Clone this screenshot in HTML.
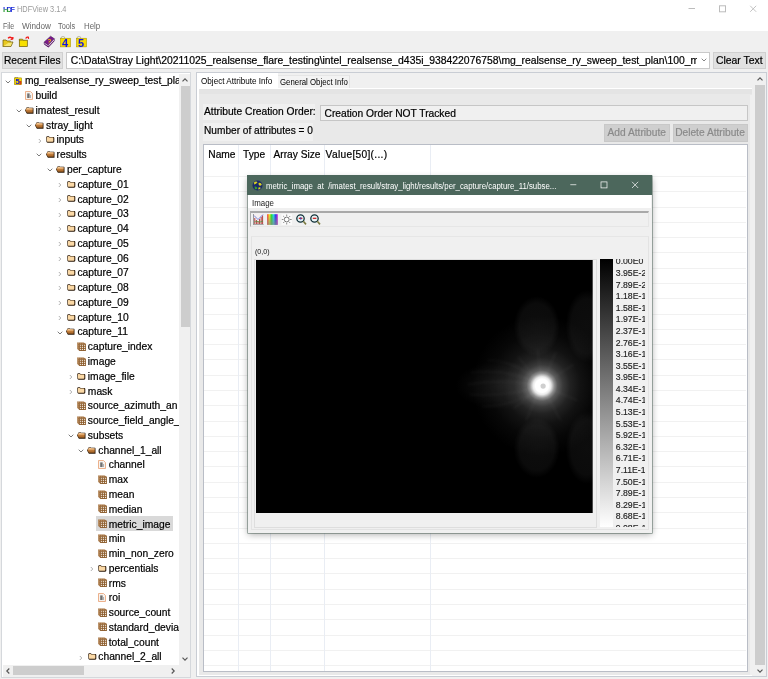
<!DOCTYPE html>
<html><head><meta charset="utf-8"><title>HDFView 3.1.4</title>
<style>
*{box-sizing:border-box;margin:0;padding:0}
html,body{width:768px;height:679px;overflow:hidden;background:#f0f0f0;font-family:"Liberation Sans",sans-serif;}
body{position:relative}
.abs{position:absolute}
#titlebar{position:absolute;left:0;top:0;width:768px;height:31px;background:#fff}
#title{position:absolute;left:16.5px;top:3.6px;line-height:10px;transform-origin:0 0;transform:scaleX(0.889);font-size:8.3px;color:#9a9a9a;white-space:nowrap}
#menu{position:absolute;left:2px;top:19.5px;font-size:8.7px;color:#707070;white-space:nowrap;word-spacing:0}
.mi{position:absolute;top:20.9px;color:#666;white-space:nowrap;line-height:10px;font-size:8.3px;transform-origin:0 0}
.btn{position:absolute;background:#e1e1e1;border:1px solid #d0d0d0;-webkit-text-stroke:0.2px;font-size:10.2px;color:#000;text-align:center;white-space:nowrap}
#combo{position:absolute;left:66px;top:51.5px;width:643.5px;height:17px;background:#fff;border:1px solid #c9c9c9;-webkit-text-stroke:0.2px #000;font-size:10.38px;line-height:15px;padding-left:3.7px;white-space:nowrap;overflow:hidden;color:#000}
/* tree */
#treepanel{position:absolute;left:1px;top:72px;width:190px;height:606px;background:#fff;border:1px solid #d5d8dc}
.tl{position:absolute;font-size:10.28px;-webkit-text-stroke:0.2px #000;line-height:15px;white-space:nowrap;color:#000}
.ti{position:absolute;line-height:0}
.ar{position:absolute}
.sel{position:absolute;height:14.8px;background:#d9d9d9}
.ic{display:block}
#rpanel{position:absolute;left:196px;top:72px;width:571px;height:605px;border:1px solid #c9cdd4;background:#f0f0f0}
.tab{position:absolute;font-size:8.6px;transform-origin:0 0;transform:scaleX(0.945);white-space:nowrap;color:#000;line-height:14px}
.hl{position:absolute;left:204px;width:542px;height:1px;background:#f1f1f1}
.vl{position:absolute;top:145.3px;width:1px;height:525.5px;background:#e9edf4}
.th{position:absolute;top:146.8px;-webkit-text-stroke:0.2px #000;font-size:10.2px;line-height:15px;white-space:nowrap}
.lbl{position:absolute;font-size:10.25px;-webkit-text-stroke:0.2px #000;line-height:15px;white-space:nowrap;background:#f0f0f0}
/* inner window */
#win{position:absolute;left:247.7px;top:175.7px;width:404px;height:357.8px;background:#f0f0f0;box-shadow:0 1.5px 7px rgba(0,0,0,.33), 0 0 0 0.6px #7a8f85}
#wtitle{position:absolute;left:-0.6px;top:-0.4px;width:405.2px;height:20.1px;background:#4c675c}
#wtitle .t{position:absolute;left:19.2px;top:5.8px;font-size:8.5px;line-height:10px;color:#fff;white-space:nowrap;transform-origin:0 0;transform:scaleX(0.9205)}
.cbl{position:absolute;left:615.8px;-webkit-text-stroke:0.15px;font-size:8.7px;line-height:10px;white-space:nowrap;color:#222}
</style></head><body>
<div id="titlebar">
 <svg class="abs" style="left:2.8px;top:5px" width="13" height="9" viewBox="0 0 13 9"><defs><clipPath id="lt"><rect x="0" y="0" width="13" height="4.4"/></clipPath><clipPath id="lb"><rect x="0" y="4.4" width="7" height="5"/></clipPath><clipPath id="lb2"><rect x="7" y="4.4" width="6" height="5"/></clipPath></defs><g font-family="Liberation Sans,sans-serif" font-size="7.6" font-weight="bold" letter-spacing="-1.9"><text x="0" y="7.2" fill="#2030d8" clip-path="url(#lt)">HDF</text><text x="0" y="7.2" fill="#2a9a30" clip-path="url(#lb)">HDF</text><text x="0" y="7.2" fill="#2030d8" clip-path="url(#lb2)">HDF</text></g></svg>
 <div id="title">HDFView 3.1.4</div>
 <div class="mi" style="left:2.5px;transform:scaleX(0.842)">File</div><div class="mi" style="left:21.7px;transform:scaleX(0.983)">Window</div><div class="mi" style="left:58.2px;transform:scaleX(0.887)">Tools</div><div class="mi" style="left:84.2px;transform:scaleX(0.952)">Help</div>
 <svg class="abs" style="left:680px;top:0" width="88" height="18" viewBox="0 0 88 18"><path d="M8.5 8.5H15" stroke="#bcbcbc" stroke-width="1"/><rect x="39.5" y="5.8" width="6" height="6" fill="none" stroke="#bcbcbc" stroke-width="1"/><path d="M70.2 5.8L76.2 11.8M76.2 5.8L70.2 11.8" stroke="#bcbcbc" stroke-width="0.9"/></svg>
</div>
<!-- toolbar icons -->
<svg class="abs" style="left:2px;top:35px" width="45" height="14" viewBox="0 0 45 14">
 <path d="M1 11.5L3 7H11L9 11.5Z" fill="#f8e870" stroke="#6b5600" stroke-width="0.7"/><path d="M1 11.5V5H4L5 6H8.5V6.5" fill="#e8c820" stroke="#6b5600" stroke-width="0.7"/><path d="M6 3.2Q8.3 1.2 10.6 3.6M10.8 4.2L8.6 4.4M10.8 4.2L10.9 2" fill="none" stroke="#f01818" stroke-width="1.3"/>
 <rect x="17.3" y="5.2" width="8" height="6.3" fill="#f8e000" stroke="#6b5600" stroke-width="0.7"/><path d="M17.3 5.2V4.2H20.5L21.3 5.2" fill="#f8e000" stroke="#6b5600" stroke-width="0.7"/><path d="M23.8 3.6Q24.2 1.8 26 2.2M26.6 3.8L26.2 1.6" stroke="#f01818" stroke-width="1.2" fill="none"/>
</svg>
<svg class="abs" style="left:43px;top:35px" width="46" height="14" viewBox="0 0 46 14">
 <path d="M1 7.2L7.6 1.2L11.4 3.8L5.2 10.2Z" fill="#7a1a8a" stroke="#3a0a4a" stroke-width="0.5"/><path d="M1 7.2L5.2 10.2L5.4 12L1.2 9Z" fill="#f0e6f2" stroke="#4a1a5a" stroke-width="0.5"/><path d="M5.2 10.2L11.4 3.8V5.6L5.4 12Z" fill="#efe0f0" stroke="#4a1a5a" stroke-width="0.5"/><path d="M1.1 8.9L5.4 12L11.4 5.7" fill="none" stroke="#5a1268" stroke-width="0.9"/><text x="4.6" y="8.2" font-size="6" font-weight="bold" fill="#f5c800" font-family="Liberation Sans,sans-serif" transform="rotate(8 6 6)">?</text>
 <path d="M18.3 3.4V2.6Q18.3 1.6 19.3 1.6H20.6Q21.6 1.6 21.6 2.6V3.4" fill="#f4f4f0" stroke="#8a8a70" stroke-width="0.6"/><rect x="17.4" y="3.2" width="10.2" height="8.7" fill="#f8dc00" stroke="#a08a00" stroke-width="0.5"/><text x="18.9" y="11.7" font-size="11" font-weight="bold" fill="#1414e0" font-family="Liberation Sans,sans-serif">4</text>
 <path d="M34.3 3.4V2.6Q34.3 1.6 35.3 1.6H36.6Q37.6 1.6 37.6 2.6V3.4" fill="#f4f4f0" stroke="#8a8a70" stroke-width="0.6"/><rect x="33.4" y="3.2" width="10.2" height="8.7" fill="#f8dc00" stroke="#a08a00" stroke-width="0.5"/><text x="35.1" y="11.7" font-size="11" font-weight="bold" fill="#1414e0" font-family="Liberation Sans,sans-serif">5</text>
</svg>
<div class="btn" style="left:1.5px;top:51.5px;width:61.5px;height:17px;line-height:15.5px">Recent Files</div>
<div id="combo">C:\Data\Stray Light\20211025_realsense_flare_testing\intel_realsense_d435i_938422076758\mg_realsense_ry_sweep_test_plan\100_mg_realsense</div>
<div class="abs" style="left:696.9px;top:53px;width:11.9px;height:14px;background:#fff"></div>
<svg class="abs" style="left:700.9px;top:58px" width="6" height="4" viewBox="0 0 6 4"><path d="M0.7 0.7L3 3L5.3 0.7" fill="none" stroke="#707070" stroke-width="0.85"/></svg>
<div class="btn" style="left:713px;top:51.5px;width:52.5px;height:17px;line-height:15.5px;font-size:10.4px">Clear Text</div>

<!-- left tree -->
<div id="treepanel"></div>
<svg class="ar" style="left:5.20px;top:79.60px" width="6" height="4" viewBox="0 0 6 4"><path d="M0.7 0.7 L3 3 L5.3 0.7" fill="none" stroke="#5a5a5a" stroke-width="0.8"/></svg><div class="ti" style="left:14.30px;top:76.50px"><svg class="ic" width="8" height="8" viewBox="0 0 8 8"><path d="M1.2 1 Q1.2 0.2 2 0.2 H3 Q3.8 0.2 3.8 1" fill="none" stroke="#6b5600" stroke-width="0.6"/><rect x="0.3" y="0.9" width="7.3" height="6.8" fill="#f8dc00" stroke="#8a7400" stroke-width="0.5"/><rect x="5.3" y="4" width="2.1" height="3.5" fill="#d84010"/><text x="1.5" y="7.2" font-family="Liberation Sans, sans-serif" font-weight="bold" font-size="7.6" fill="#1010d8">5</text></svg></div><div class="tl" style="left:24.90px;top:73.40px">mg_realsense_ry_sweep_test_pla</div>
<div class="ti" style="left:24.90px;top:90.77px"><svg class="ic" width="8" height="9" viewBox="0 0 8 9"><path d="M0.5 0.5H5.5L7.5 2.5V8.5H0.5Z" fill="#f6f2ee" stroke="#eaa880" stroke-width="0.9"/><rect x="2.2" y="2.4" width="2.4" height="4.6" fill="#707070"/><rect x="4.7" y="4" width="1.2" height="3" fill="#a8a8a8"/></svg></div><div class="tl" style="left:35.60px;top:88.17px">build</div>
<svg class="ar" style="left:15.50px;top:109.14px" width="6" height="4" viewBox="0 0 6 4"><path d="M0.7 0.7 L3 3 L5.3 0.7" fill="none" stroke="#5a5a5a" stroke-width="0.8"/></svg><div class="ti" style="left:24.60px;top:106.84px"><svg class="ic" width="9" height="7" viewBox="0 0 9 7"><defs><linearGradient id="fo" x1="0" x2="0" y1="0" y2="1"><stop offset="0" stop-color="#e09850"/><stop offset="1" stop-color="#a06024"/></linearGradient></defs><path d="M0 3.4 L1.5 0.5 L3.4 0.2 L4.2 0.8 L8.1 0.8 L8.5 1.4 L8.5 6.7 L1.9 6.7 Z" fill="#2a1808"/><path d="M4.6 0.7 L8.1 0.9 L8.2 1.6 L4.6 1.6Z" fill="#7c8694"/><path d="M0.5 3.4 L1.8 1.1 L7.7 1.4 L7.7 5.7 L2.1 5.7 Z" fill="url(#fo)"/><path d="M1.8 1 L3.3 0.8 L4 1.2 L7.5 1.4 L7.5 2.4 L1.1 2.4Z" fill="#f4c894"/></svg></div><div class="tl" style="left:35.60px;top:102.94px">imatest_result</div>
<svg class="ar" style="left:25.95px;top:123.91px" width="6" height="4" viewBox="0 0 6 4"><path d="M0.7 0.7 L3 3 L5.3 0.7" fill="none" stroke="#5a5a5a" stroke-width="0.8"/></svg><div class="ti" style="left:35.05px;top:121.61px"><svg class="ic" width="9" height="7" viewBox="0 0 9 7"><defs><linearGradient id="fo" x1="0" x2="0" y1="0" y2="1"><stop offset="0" stop-color="#e09850"/><stop offset="1" stop-color="#a06024"/></linearGradient></defs><path d="M0 3.4 L1.5 0.5 L3.4 0.2 L4.2 0.8 L8.1 0.8 L8.5 1.4 L8.5 6.7 L1.9 6.7 Z" fill="#2a1808"/><path d="M4.6 0.7 L8.1 0.9 L8.2 1.6 L4.6 1.6Z" fill="#7c8694"/><path d="M0.5 3.4 L1.8 1.1 L7.7 1.4 L7.7 5.7 L2.1 5.7 Z" fill="url(#fo)"/><path d="M1.8 1 L3.3 0.8 L4 1.2 L7.5 1.4 L7.5 2.4 L1.1 2.4Z" fill="#f4c894"/></svg></div><div class="tl" style="left:46.05px;top:117.71px">stray_light</div>
<svg class="ar" style="left:37.50px;top:137.68px" width="4" height="6" viewBox="0 0 4 6"><path d="M0.8 1 L2.8 3 L0.8 5" fill="none" stroke="#a0a0a0" stroke-width="0.85"/></svg><div class="ti" style="left:45.70px;top:136.38px"><svg class="ic" width="9" height="7" viewBox="0 0 9 7"><path d="M0.2 1.4 Q0.2 0.2 1.4 0.2 L2.8 0.2 L3.6 0.9 L7.2 0.9 Q8.3 0.9 8.3 2 L8.3 5.6 Q8.3 6.7 7.2 6.7 L1.6 6.7 Q0.5 6.7 0.4 5.6 Z" fill="#2a1808"/><path d="M0.8 1.6 Q0.8 0.9 1.5 0.9 L2.6 0.9 L3.3 1.6 L6.6 1.6 Q7.3 1.6 7.3 2.3 L7.3 5 Q7.3 5.7 6.6 5.7 L1.6 5.7 Q0.9 5.7 0.9 5 Z" fill="#fbd9a6"/></svg></div><div class="tl" style="left:56.50px;top:132.48px">inputs</div>
<svg class="ar" style="left:36.40px;top:153.45px" width="6" height="4" viewBox="0 0 6 4"><path d="M0.7 0.7 L3 3 L5.3 0.7" fill="none" stroke="#5a5a5a" stroke-width="0.8"/></svg><div class="ti" style="left:45.50px;top:151.15px"><svg class="ic" width="9" height="7" viewBox="0 0 9 7"><defs><linearGradient id="fo" x1="0" x2="0" y1="0" y2="1"><stop offset="0" stop-color="#e09850"/><stop offset="1" stop-color="#a06024"/></linearGradient></defs><path d="M0 3.4 L1.5 0.5 L3.4 0.2 L4.2 0.8 L8.1 0.8 L8.5 1.4 L8.5 6.7 L1.9 6.7 Z" fill="#2a1808"/><path d="M4.6 0.7 L8.1 0.9 L8.2 1.6 L4.6 1.6Z" fill="#7c8694"/><path d="M0.5 3.4 L1.8 1.1 L7.7 1.4 L7.7 5.7 L2.1 5.7 Z" fill="url(#fo)"/><path d="M1.8 1 L3.3 0.8 L4 1.2 L7.5 1.4 L7.5 2.4 L1.1 2.4Z" fill="#f4c894"/></svg></div><div class="tl" style="left:56.50px;top:147.25px">results</div>
<svg class="ar" style="left:46.85px;top:168.22px" width="6" height="4" viewBox="0 0 6 4"><path d="M0.7 0.7 L3 3 L5.3 0.7" fill="none" stroke="#5a5a5a" stroke-width="0.8"/></svg><div class="ti" style="left:55.95px;top:165.92px"><svg class="ic" width="9" height="7" viewBox="0 0 9 7"><defs><linearGradient id="fo" x1="0" x2="0" y1="0" y2="1"><stop offset="0" stop-color="#e09850"/><stop offset="1" stop-color="#a06024"/></linearGradient></defs><path d="M0 3.4 L1.5 0.5 L3.4 0.2 L4.2 0.8 L8.1 0.8 L8.5 1.4 L8.5 6.7 L1.9 6.7 Z" fill="#2a1808"/><path d="M4.6 0.7 L8.1 0.9 L8.2 1.6 L4.6 1.6Z" fill="#7c8694"/><path d="M0.5 3.4 L1.8 1.1 L7.7 1.4 L7.7 5.7 L2.1 5.7 Z" fill="url(#fo)"/><path d="M1.8 1 L3.3 0.8 L4 1.2 L7.5 1.4 L7.5 2.4 L1.1 2.4Z" fill="#f4c894"/></svg></div><div class="tl" style="left:66.95px;top:162.02px">per_capture</div>
<svg class="ar" style="left:58.40px;top:181.99px" width="4" height="6" viewBox="0 0 4 6"><path d="M0.8 1 L2.8 3 L0.8 5" fill="none" stroke="#a0a0a0" stroke-width="0.85"/></svg><div class="ti" style="left:66.60px;top:180.69px"><svg class="ic" width="9" height="7" viewBox="0 0 9 7"><path d="M0.2 1.4 Q0.2 0.2 1.4 0.2 L2.8 0.2 L3.6 0.9 L7.2 0.9 Q8.3 0.9 8.3 2 L8.3 5.6 Q8.3 6.7 7.2 6.7 L1.6 6.7 Q0.5 6.7 0.4 5.6 Z" fill="#2a1808"/><path d="M0.8 1.6 Q0.8 0.9 1.5 0.9 L2.6 0.9 L3.3 1.6 L6.6 1.6 Q7.3 1.6 7.3 2.3 L7.3 5 Q7.3 5.7 6.6 5.7 L1.6 5.7 Q0.9 5.7 0.9 5 Z" fill="#fbd9a6"/></svg></div><div class="tl" style="left:77.40px;top:176.79px">capture_01</div>
<svg class="ar" style="left:58.40px;top:196.76px" width="4" height="6" viewBox="0 0 4 6"><path d="M0.8 1 L2.8 3 L0.8 5" fill="none" stroke="#a0a0a0" stroke-width="0.85"/></svg><div class="ti" style="left:66.60px;top:195.46px"><svg class="ic" width="9" height="7" viewBox="0 0 9 7"><path d="M0.2 1.4 Q0.2 0.2 1.4 0.2 L2.8 0.2 L3.6 0.9 L7.2 0.9 Q8.3 0.9 8.3 2 L8.3 5.6 Q8.3 6.7 7.2 6.7 L1.6 6.7 Q0.5 6.7 0.4 5.6 Z" fill="#2a1808"/><path d="M0.8 1.6 Q0.8 0.9 1.5 0.9 L2.6 0.9 L3.3 1.6 L6.6 1.6 Q7.3 1.6 7.3 2.3 L7.3 5 Q7.3 5.7 6.6 5.7 L1.6 5.7 Q0.9 5.7 0.9 5 Z" fill="#fbd9a6"/></svg></div><div class="tl" style="left:77.40px;top:191.56px">capture_02</div>
<svg class="ar" style="left:58.40px;top:211.53px" width="4" height="6" viewBox="0 0 4 6"><path d="M0.8 1 L2.8 3 L0.8 5" fill="none" stroke="#a0a0a0" stroke-width="0.85"/></svg><div class="ti" style="left:66.60px;top:210.23px"><svg class="ic" width="9" height="7" viewBox="0 0 9 7"><path d="M0.2 1.4 Q0.2 0.2 1.4 0.2 L2.8 0.2 L3.6 0.9 L7.2 0.9 Q8.3 0.9 8.3 2 L8.3 5.6 Q8.3 6.7 7.2 6.7 L1.6 6.7 Q0.5 6.7 0.4 5.6 Z" fill="#2a1808"/><path d="M0.8 1.6 Q0.8 0.9 1.5 0.9 L2.6 0.9 L3.3 1.6 L6.6 1.6 Q7.3 1.6 7.3 2.3 L7.3 5 Q7.3 5.7 6.6 5.7 L1.6 5.7 Q0.9 5.7 0.9 5 Z" fill="#fbd9a6"/></svg></div><div class="tl" style="left:77.40px;top:206.33px">capture_03</div>
<svg class="ar" style="left:58.40px;top:226.30px" width="4" height="6" viewBox="0 0 4 6"><path d="M0.8 1 L2.8 3 L0.8 5" fill="none" stroke="#a0a0a0" stroke-width="0.85"/></svg><div class="ti" style="left:66.60px;top:225.00px"><svg class="ic" width="9" height="7" viewBox="0 0 9 7"><path d="M0.2 1.4 Q0.2 0.2 1.4 0.2 L2.8 0.2 L3.6 0.9 L7.2 0.9 Q8.3 0.9 8.3 2 L8.3 5.6 Q8.3 6.7 7.2 6.7 L1.6 6.7 Q0.5 6.7 0.4 5.6 Z" fill="#2a1808"/><path d="M0.8 1.6 Q0.8 0.9 1.5 0.9 L2.6 0.9 L3.3 1.6 L6.6 1.6 Q7.3 1.6 7.3 2.3 L7.3 5 Q7.3 5.7 6.6 5.7 L1.6 5.7 Q0.9 5.7 0.9 5 Z" fill="#fbd9a6"/></svg></div><div class="tl" style="left:77.40px;top:221.10px">capture_04</div>
<svg class="ar" style="left:58.40px;top:241.07px" width="4" height="6" viewBox="0 0 4 6"><path d="M0.8 1 L2.8 3 L0.8 5" fill="none" stroke="#a0a0a0" stroke-width="0.85"/></svg><div class="ti" style="left:66.60px;top:239.77px"><svg class="ic" width="9" height="7" viewBox="0 0 9 7"><path d="M0.2 1.4 Q0.2 0.2 1.4 0.2 L2.8 0.2 L3.6 0.9 L7.2 0.9 Q8.3 0.9 8.3 2 L8.3 5.6 Q8.3 6.7 7.2 6.7 L1.6 6.7 Q0.5 6.7 0.4 5.6 Z" fill="#2a1808"/><path d="M0.8 1.6 Q0.8 0.9 1.5 0.9 L2.6 0.9 L3.3 1.6 L6.6 1.6 Q7.3 1.6 7.3 2.3 L7.3 5 Q7.3 5.7 6.6 5.7 L1.6 5.7 Q0.9 5.7 0.9 5 Z" fill="#fbd9a6"/></svg></div><div class="tl" style="left:77.40px;top:235.87px">capture_05</div>
<svg class="ar" style="left:58.40px;top:255.84px" width="4" height="6" viewBox="0 0 4 6"><path d="M0.8 1 L2.8 3 L0.8 5" fill="none" stroke="#a0a0a0" stroke-width="0.85"/></svg><div class="ti" style="left:66.60px;top:254.54px"><svg class="ic" width="9" height="7" viewBox="0 0 9 7"><path d="M0.2 1.4 Q0.2 0.2 1.4 0.2 L2.8 0.2 L3.6 0.9 L7.2 0.9 Q8.3 0.9 8.3 2 L8.3 5.6 Q8.3 6.7 7.2 6.7 L1.6 6.7 Q0.5 6.7 0.4 5.6 Z" fill="#2a1808"/><path d="M0.8 1.6 Q0.8 0.9 1.5 0.9 L2.6 0.9 L3.3 1.6 L6.6 1.6 Q7.3 1.6 7.3 2.3 L7.3 5 Q7.3 5.7 6.6 5.7 L1.6 5.7 Q0.9 5.7 0.9 5 Z" fill="#fbd9a6"/></svg></div><div class="tl" style="left:77.40px;top:250.64px">capture_06</div>
<svg class="ar" style="left:58.40px;top:270.61px" width="4" height="6" viewBox="0 0 4 6"><path d="M0.8 1 L2.8 3 L0.8 5" fill="none" stroke="#a0a0a0" stroke-width="0.85"/></svg><div class="ti" style="left:66.60px;top:269.31px"><svg class="ic" width="9" height="7" viewBox="0 0 9 7"><path d="M0.2 1.4 Q0.2 0.2 1.4 0.2 L2.8 0.2 L3.6 0.9 L7.2 0.9 Q8.3 0.9 8.3 2 L8.3 5.6 Q8.3 6.7 7.2 6.7 L1.6 6.7 Q0.5 6.7 0.4 5.6 Z" fill="#2a1808"/><path d="M0.8 1.6 Q0.8 0.9 1.5 0.9 L2.6 0.9 L3.3 1.6 L6.6 1.6 Q7.3 1.6 7.3 2.3 L7.3 5 Q7.3 5.7 6.6 5.7 L1.6 5.7 Q0.9 5.7 0.9 5 Z" fill="#fbd9a6"/></svg></div><div class="tl" style="left:77.40px;top:265.41px">capture_07</div>
<svg class="ar" style="left:58.40px;top:285.38px" width="4" height="6" viewBox="0 0 4 6"><path d="M0.8 1 L2.8 3 L0.8 5" fill="none" stroke="#a0a0a0" stroke-width="0.85"/></svg><div class="ti" style="left:66.60px;top:284.08px"><svg class="ic" width="9" height="7" viewBox="0 0 9 7"><path d="M0.2 1.4 Q0.2 0.2 1.4 0.2 L2.8 0.2 L3.6 0.9 L7.2 0.9 Q8.3 0.9 8.3 2 L8.3 5.6 Q8.3 6.7 7.2 6.7 L1.6 6.7 Q0.5 6.7 0.4 5.6 Z" fill="#2a1808"/><path d="M0.8 1.6 Q0.8 0.9 1.5 0.9 L2.6 0.9 L3.3 1.6 L6.6 1.6 Q7.3 1.6 7.3 2.3 L7.3 5 Q7.3 5.7 6.6 5.7 L1.6 5.7 Q0.9 5.7 0.9 5 Z" fill="#fbd9a6"/></svg></div><div class="tl" style="left:77.40px;top:280.18px">capture_08</div>
<svg class="ar" style="left:58.40px;top:300.15px" width="4" height="6" viewBox="0 0 4 6"><path d="M0.8 1 L2.8 3 L0.8 5" fill="none" stroke="#a0a0a0" stroke-width="0.85"/></svg><div class="ti" style="left:66.60px;top:298.85px"><svg class="ic" width="9" height="7" viewBox="0 0 9 7"><path d="M0.2 1.4 Q0.2 0.2 1.4 0.2 L2.8 0.2 L3.6 0.9 L7.2 0.9 Q8.3 0.9 8.3 2 L8.3 5.6 Q8.3 6.7 7.2 6.7 L1.6 6.7 Q0.5 6.7 0.4 5.6 Z" fill="#2a1808"/><path d="M0.8 1.6 Q0.8 0.9 1.5 0.9 L2.6 0.9 L3.3 1.6 L6.6 1.6 Q7.3 1.6 7.3 2.3 L7.3 5 Q7.3 5.7 6.6 5.7 L1.6 5.7 Q0.9 5.7 0.9 5 Z" fill="#fbd9a6"/></svg></div><div class="tl" style="left:77.40px;top:294.95px">capture_09</div>
<svg class="ar" style="left:58.40px;top:314.92px" width="4" height="6" viewBox="0 0 4 6"><path d="M0.8 1 L2.8 3 L0.8 5" fill="none" stroke="#a0a0a0" stroke-width="0.85"/></svg><div class="ti" style="left:66.60px;top:313.62px"><svg class="ic" width="9" height="7" viewBox="0 0 9 7"><path d="M0.2 1.4 Q0.2 0.2 1.4 0.2 L2.8 0.2 L3.6 0.9 L7.2 0.9 Q8.3 0.9 8.3 2 L8.3 5.6 Q8.3 6.7 7.2 6.7 L1.6 6.7 Q0.5 6.7 0.4 5.6 Z" fill="#2a1808"/><path d="M0.8 1.6 Q0.8 0.9 1.5 0.9 L2.6 0.9 L3.3 1.6 L6.6 1.6 Q7.3 1.6 7.3 2.3 L7.3 5 Q7.3 5.7 6.6 5.7 L1.6 5.7 Q0.9 5.7 0.9 5 Z" fill="#fbd9a6"/></svg></div><div class="tl" style="left:77.40px;top:309.72px">capture_10</div>
<svg class="ar" style="left:57.30px;top:330.69px" width="6" height="4" viewBox="0 0 6 4"><path d="M0.7 0.7 L3 3 L5.3 0.7" fill="none" stroke="#5a5a5a" stroke-width="0.8"/></svg><div class="ti" style="left:66.40px;top:328.39px"><svg class="ic" width="9" height="7" viewBox="0 0 9 7"><defs><linearGradient id="fo" x1="0" x2="0" y1="0" y2="1"><stop offset="0" stop-color="#e09850"/><stop offset="1" stop-color="#a06024"/></linearGradient></defs><path d="M0 3.4 L1.5 0.5 L3.4 0.2 L4.2 0.8 L8.1 0.8 L8.5 1.4 L8.5 6.7 L1.9 6.7 Z" fill="#2a1808"/><path d="M4.6 0.7 L8.1 0.9 L8.2 1.6 L4.6 1.6Z" fill="#7c8694"/><path d="M0.5 3.4 L1.8 1.1 L7.7 1.4 L7.7 5.7 L2.1 5.7 Z" fill="url(#fo)"/><path d="M1.8 1 L3.3 0.8 L4 1.2 L7.5 1.4 L7.5 2.4 L1.1 2.4Z" fill="#f4c894"/></svg></div><div class="tl" style="left:77.40px;top:324.49px">capture_11</div>
<div class="ti" style="left:76.75px;top:341.86px"><svg class="ic" width="9" height="9" viewBox="0 0 9 9"><path d="M0.2 0.5 H6.8 L8.9 2 V8.6 H2.2 L0.2 7 Z" fill="#a87848"/><path d="M2.4 2.4H8.7V8.4H2.4Z" fill="#f4ece0"/><path d="M2.2 2.2H8.8M2.2 4.3H8.8M2.2 6.4H8.8M2.2 8.5H8.8M2.3 2.2V8.6M4.4 2.2V8.6M6.5 2.2V8.6M8.7 2.2V8.6" stroke="#8a5a2a" stroke-width="0.9"/><path d="M0.3 0.6L2.3 2.2M2.4 0.5L4.4 2.2M4.6 0.5L6.5 2.2M0.3 2.8L2.3 4.4M0.3 5L2.3 6.5" stroke="#c8a078" stroke-width="0.5"/></svg></div><div class="tl" style="left:87.85px;top:339.26px">capture_index</div>
<div class="ti" style="left:76.75px;top:356.63px"><svg class="ic" width="9" height="9" viewBox="0 0 9 9"><path d="M0.2 0.5 H6.8 L8.9 2 V8.6 H2.2 L0.2 7 Z" fill="#a87848"/><path d="M2.4 2.4H8.7V8.4H2.4Z" fill="#f4ece0"/><path d="M2.2 2.2H8.8M2.2 4.3H8.8M2.2 6.4H8.8M2.2 8.5H8.8M2.3 2.2V8.6M4.4 2.2V8.6M6.5 2.2V8.6M8.7 2.2V8.6" stroke="#8a5a2a" stroke-width="0.9"/><path d="M0.3 0.6L2.3 2.2M2.4 0.5L4.4 2.2M4.6 0.5L6.5 2.2M0.3 2.8L2.3 4.4M0.3 5L2.3 6.5" stroke="#c8a078" stroke-width="0.5"/></svg></div><div class="tl" style="left:87.85px;top:354.03px">image</div>
<svg class="ar" style="left:68.85px;top:374.00px" width="4" height="6" viewBox="0 0 4 6"><path d="M0.8 1 L2.8 3 L0.8 5" fill="none" stroke="#a0a0a0" stroke-width="0.85"/></svg><div class="ti" style="left:77.05px;top:372.70px"><svg class="ic" width="9" height="7" viewBox="0 0 9 7"><path d="M0.2 1.4 Q0.2 0.2 1.4 0.2 L2.8 0.2 L3.6 0.9 L7.2 0.9 Q8.3 0.9 8.3 2 L8.3 5.6 Q8.3 6.7 7.2 6.7 L1.6 6.7 Q0.5 6.7 0.4 5.6 Z" fill="#2a1808"/><path d="M0.8 1.6 Q0.8 0.9 1.5 0.9 L2.6 0.9 L3.3 1.6 L6.6 1.6 Q7.3 1.6 7.3 2.3 L7.3 5 Q7.3 5.7 6.6 5.7 L1.6 5.7 Q0.9 5.7 0.9 5 Z" fill="#fbd9a6"/></svg></div><div class="tl" style="left:87.85px;top:368.80px">image_file</div>
<svg class="ar" style="left:68.85px;top:388.77px" width="4" height="6" viewBox="0 0 4 6"><path d="M0.8 1 L2.8 3 L0.8 5" fill="none" stroke="#a0a0a0" stroke-width="0.85"/></svg><div class="ti" style="left:77.05px;top:387.47px"><svg class="ic" width="9" height="7" viewBox="0 0 9 7"><path d="M0.2 1.4 Q0.2 0.2 1.4 0.2 L2.8 0.2 L3.6 0.9 L7.2 0.9 Q8.3 0.9 8.3 2 L8.3 5.6 Q8.3 6.7 7.2 6.7 L1.6 6.7 Q0.5 6.7 0.4 5.6 Z" fill="#2a1808"/><path d="M0.8 1.6 Q0.8 0.9 1.5 0.9 L2.6 0.9 L3.3 1.6 L6.6 1.6 Q7.3 1.6 7.3 2.3 L7.3 5 Q7.3 5.7 6.6 5.7 L1.6 5.7 Q0.9 5.7 0.9 5 Z" fill="#fbd9a6"/></svg></div><div class="tl" style="left:87.85px;top:383.57px">mask</div>
<div class="ti" style="left:76.75px;top:400.94px"><svg class="ic" width="9" height="9" viewBox="0 0 9 9"><path d="M0.2 0.5 H6.8 L8.9 2 V8.6 H2.2 L0.2 7 Z" fill="#a87848"/><path d="M2.4 2.4H8.7V8.4H2.4Z" fill="#f4ece0"/><path d="M2.2 2.2H8.8M2.2 4.3H8.8M2.2 6.4H8.8M2.2 8.5H8.8M2.3 2.2V8.6M4.4 2.2V8.6M6.5 2.2V8.6M8.7 2.2V8.6" stroke="#8a5a2a" stroke-width="0.9"/><path d="M0.3 0.6L2.3 2.2M2.4 0.5L4.4 2.2M4.6 0.5L6.5 2.2M0.3 2.8L2.3 4.4M0.3 5L2.3 6.5" stroke="#c8a078" stroke-width="0.5"/></svg></div><div class="tl" style="left:87.85px;top:398.34px">source_azimuth_an</div>
<div class="ti" style="left:76.75px;top:415.71px"><svg class="ic" width="9" height="9" viewBox="0 0 9 9"><path d="M0.2 0.5 H6.8 L8.9 2 V8.6 H2.2 L0.2 7 Z" fill="#a87848"/><path d="M2.4 2.4H8.7V8.4H2.4Z" fill="#f4ece0"/><path d="M2.2 2.2H8.8M2.2 4.3H8.8M2.2 6.4H8.8M2.2 8.5H8.8M2.3 2.2V8.6M4.4 2.2V8.6M6.5 2.2V8.6M8.7 2.2V8.6" stroke="#8a5a2a" stroke-width="0.9"/><path d="M0.3 0.6L2.3 2.2M2.4 0.5L4.4 2.2M4.6 0.5L6.5 2.2M0.3 2.8L2.3 4.4M0.3 5L2.3 6.5" stroke="#c8a078" stroke-width="0.5"/></svg></div><div class="tl" style="left:87.85px;top:413.11px">source_field_angle_</div>
<svg class="ar" style="left:67.75px;top:434.08px" width="6" height="4" viewBox="0 0 6 4"><path d="M0.7 0.7 L3 3 L5.3 0.7" fill="none" stroke="#5a5a5a" stroke-width="0.8"/></svg><div class="ti" style="left:76.85px;top:431.78px"><svg class="ic" width="9" height="7" viewBox="0 0 9 7"><defs><linearGradient id="fo" x1="0" x2="0" y1="0" y2="1"><stop offset="0" stop-color="#e09850"/><stop offset="1" stop-color="#a06024"/></linearGradient></defs><path d="M0 3.4 L1.5 0.5 L3.4 0.2 L4.2 0.8 L8.1 0.8 L8.5 1.4 L8.5 6.7 L1.9 6.7 Z" fill="#2a1808"/><path d="M4.6 0.7 L8.1 0.9 L8.2 1.6 L4.6 1.6Z" fill="#7c8694"/><path d="M0.5 3.4 L1.8 1.1 L7.7 1.4 L7.7 5.7 L2.1 5.7 Z" fill="url(#fo)"/><path d="M1.8 1 L3.3 0.8 L4 1.2 L7.5 1.4 L7.5 2.4 L1.1 2.4Z" fill="#f4c894"/></svg></div><div class="tl" style="left:87.85px;top:427.88px">subsets</div>
<svg class="ar" style="left:78.20px;top:448.85px" width="6" height="4" viewBox="0 0 6 4"><path d="M0.7 0.7 L3 3 L5.3 0.7" fill="none" stroke="#5a5a5a" stroke-width="0.8"/></svg><div class="ti" style="left:87.30px;top:446.55px"><svg class="ic" width="9" height="7" viewBox="0 0 9 7"><defs><linearGradient id="fo" x1="0" x2="0" y1="0" y2="1"><stop offset="0" stop-color="#e09850"/><stop offset="1" stop-color="#a06024"/></linearGradient></defs><path d="M0 3.4 L1.5 0.5 L3.4 0.2 L4.2 0.8 L8.1 0.8 L8.5 1.4 L8.5 6.7 L1.9 6.7 Z" fill="#2a1808"/><path d="M4.6 0.7 L8.1 0.9 L8.2 1.6 L4.6 1.6Z" fill="#7c8694"/><path d="M0.5 3.4 L1.8 1.1 L7.7 1.4 L7.7 5.7 L2.1 5.7 Z" fill="url(#fo)"/><path d="M1.8 1 L3.3 0.8 L4 1.2 L7.5 1.4 L7.5 2.4 L1.1 2.4Z" fill="#f4c894"/></svg></div><div class="tl" style="left:98.30px;top:442.65px">channel_1_all</div>
<div class="ti" style="left:98.05px;top:460.02px"><svg class="ic" width="8" height="9" viewBox="0 0 8 9"><path d="M0.5 0.5H5.5L7.5 2.5V8.5H0.5Z" fill="#f6f2ee" stroke="#eaa880" stroke-width="0.9"/><rect x="2.2" y="2.4" width="2.4" height="4.6" fill="#707070"/><rect x="4.7" y="4" width="1.2" height="3" fill="#a8a8a8"/></svg></div><div class="tl" style="left:108.75px;top:457.42px">channel</div>
<div class="ti" style="left:97.65px;top:474.79px"><svg class="ic" width="9" height="9" viewBox="0 0 9 9"><path d="M0.2 0.5 H6.8 L8.9 2 V8.6 H2.2 L0.2 7 Z" fill="#a87848"/><path d="M2.4 2.4H8.7V8.4H2.4Z" fill="#f4ece0"/><path d="M2.2 2.2H8.8M2.2 4.3H8.8M2.2 6.4H8.8M2.2 8.5H8.8M2.3 2.2V8.6M4.4 2.2V8.6M6.5 2.2V8.6M8.7 2.2V8.6" stroke="#8a5a2a" stroke-width="0.9"/><path d="M0.3 0.6L2.3 2.2M2.4 0.5L4.4 2.2M4.6 0.5L6.5 2.2M0.3 2.8L2.3 4.4M0.3 5L2.3 6.5" stroke="#c8a078" stroke-width="0.5"/></svg></div><div class="tl" style="left:108.75px;top:472.19px">max</div>
<div class="ti" style="left:97.65px;top:489.56px"><svg class="ic" width="9" height="9" viewBox="0 0 9 9"><path d="M0.2 0.5 H6.8 L8.9 2 V8.6 H2.2 L0.2 7 Z" fill="#a87848"/><path d="M2.4 2.4H8.7V8.4H2.4Z" fill="#f4ece0"/><path d="M2.2 2.2H8.8M2.2 4.3H8.8M2.2 6.4H8.8M2.2 8.5H8.8M2.3 2.2V8.6M4.4 2.2V8.6M6.5 2.2V8.6M8.7 2.2V8.6" stroke="#8a5a2a" stroke-width="0.9"/><path d="M0.3 0.6L2.3 2.2M2.4 0.5L4.4 2.2M4.6 0.5L6.5 2.2M0.3 2.8L2.3 4.4M0.3 5L2.3 6.5" stroke="#c8a078" stroke-width="0.5"/></svg></div><div class="tl" style="left:108.75px;top:486.96px">mean</div>
<div class="ti" style="left:97.65px;top:504.33px"><svg class="ic" width="9" height="9" viewBox="0 0 9 9"><path d="M0.2 0.5 H6.8 L8.9 2 V8.6 H2.2 L0.2 7 Z" fill="#a87848"/><path d="M2.4 2.4H8.7V8.4H2.4Z" fill="#f4ece0"/><path d="M2.2 2.2H8.8M2.2 4.3H8.8M2.2 6.4H8.8M2.2 8.5H8.8M2.3 2.2V8.6M4.4 2.2V8.6M6.5 2.2V8.6M8.7 2.2V8.6" stroke="#8a5a2a" stroke-width="0.9"/><path d="M0.3 0.6L2.3 2.2M2.4 0.5L4.4 2.2M4.6 0.5L6.5 2.2M0.3 2.8L2.3 4.4M0.3 5L2.3 6.5" stroke="#c8a078" stroke-width="0.5"/></svg></div><div class="tl" style="left:108.75px;top:501.73px">median</div>
<div class="sel" style="left:96.25px;top:515.80px;width:76.5px"></div><div class="ti" style="left:97.65px;top:519.10px"><svg class="ic" width="9" height="9" viewBox="0 0 9 9"><path d="M0.2 0.5 H6.8 L8.9 2 V8.6 H2.2 L0.2 7 Z" fill="#a87848"/><path d="M2.4 2.4H8.7V8.4H2.4Z" fill="#f4ece0"/><path d="M2.2 2.2H8.8M2.2 4.3H8.8M2.2 6.4H8.8M2.2 8.5H8.8M2.3 2.2V8.6M4.4 2.2V8.6M6.5 2.2V8.6M8.7 2.2V8.6" stroke="#8a5a2a" stroke-width="0.9"/><path d="M0.3 0.6L2.3 2.2M2.4 0.5L4.4 2.2M4.6 0.5L6.5 2.2M0.3 2.8L2.3 4.4M0.3 5L2.3 6.5" stroke="#c8a078" stroke-width="0.5"/></svg></div><div class="tl" style="left:108.75px;top:516.50px">metric_image</div>
<div class="ti" style="left:97.65px;top:533.87px"><svg class="ic" width="9" height="9" viewBox="0 0 9 9"><path d="M0.2 0.5 H6.8 L8.9 2 V8.6 H2.2 L0.2 7 Z" fill="#a87848"/><path d="M2.4 2.4H8.7V8.4H2.4Z" fill="#f4ece0"/><path d="M2.2 2.2H8.8M2.2 4.3H8.8M2.2 6.4H8.8M2.2 8.5H8.8M2.3 2.2V8.6M4.4 2.2V8.6M6.5 2.2V8.6M8.7 2.2V8.6" stroke="#8a5a2a" stroke-width="0.9"/><path d="M0.3 0.6L2.3 2.2M2.4 0.5L4.4 2.2M4.6 0.5L6.5 2.2M0.3 2.8L2.3 4.4M0.3 5L2.3 6.5" stroke="#c8a078" stroke-width="0.5"/></svg></div><div class="tl" style="left:108.75px;top:531.27px">min</div>
<div class="ti" style="left:97.65px;top:548.64px"><svg class="ic" width="9" height="9" viewBox="0 0 9 9"><path d="M0.2 0.5 H6.8 L8.9 2 V8.6 H2.2 L0.2 7 Z" fill="#a87848"/><path d="M2.4 2.4H8.7V8.4H2.4Z" fill="#f4ece0"/><path d="M2.2 2.2H8.8M2.2 4.3H8.8M2.2 6.4H8.8M2.2 8.5H8.8M2.3 2.2V8.6M4.4 2.2V8.6M6.5 2.2V8.6M8.7 2.2V8.6" stroke="#8a5a2a" stroke-width="0.9"/><path d="M0.3 0.6L2.3 2.2M2.4 0.5L4.4 2.2M4.6 0.5L6.5 2.2M0.3 2.8L2.3 4.4M0.3 5L2.3 6.5" stroke="#c8a078" stroke-width="0.5"/></svg></div><div class="tl" style="left:108.75px;top:546.04px">min_non_zero</div>
<svg class="ar" style="left:89.75px;top:566.01px" width="4" height="6" viewBox="0 0 4 6"><path d="M0.8 1 L2.8 3 L0.8 5" fill="none" stroke="#a0a0a0" stroke-width="0.85"/></svg><div class="ti" style="left:97.95px;top:564.71px"><svg class="ic" width="9" height="7" viewBox="0 0 9 7"><path d="M0.2 1.4 Q0.2 0.2 1.4 0.2 L2.8 0.2 L3.6 0.9 L7.2 0.9 Q8.3 0.9 8.3 2 L8.3 5.6 Q8.3 6.7 7.2 6.7 L1.6 6.7 Q0.5 6.7 0.4 5.6 Z" fill="#2a1808"/><path d="M0.8 1.6 Q0.8 0.9 1.5 0.9 L2.6 0.9 L3.3 1.6 L6.6 1.6 Q7.3 1.6 7.3 2.3 L7.3 5 Q7.3 5.7 6.6 5.7 L1.6 5.7 Q0.9 5.7 0.9 5 Z" fill="#fbd9a6"/></svg></div><div class="tl" style="left:108.75px;top:560.81px">percentials</div>
<div class="ti" style="left:97.65px;top:578.18px"><svg class="ic" width="9" height="9" viewBox="0 0 9 9"><path d="M0.2 0.5 H6.8 L8.9 2 V8.6 H2.2 L0.2 7 Z" fill="#a87848"/><path d="M2.4 2.4H8.7V8.4H2.4Z" fill="#f4ece0"/><path d="M2.2 2.2H8.8M2.2 4.3H8.8M2.2 6.4H8.8M2.2 8.5H8.8M2.3 2.2V8.6M4.4 2.2V8.6M6.5 2.2V8.6M8.7 2.2V8.6" stroke="#8a5a2a" stroke-width="0.9"/><path d="M0.3 0.6L2.3 2.2M2.4 0.5L4.4 2.2M4.6 0.5L6.5 2.2M0.3 2.8L2.3 4.4M0.3 5L2.3 6.5" stroke="#c8a078" stroke-width="0.5"/></svg></div><div class="tl" style="left:108.75px;top:575.58px">rms</div>
<div class="ti" style="left:98.05px;top:592.95px"><svg class="ic" width="8" height="9" viewBox="0 0 8 9"><path d="M0.5 0.5H5.5L7.5 2.5V8.5H0.5Z" fill="#f6f2ee" stroke="#eaa880" stroke-width="0.9"/><rect x="2.2" y="2.4" width="2.4" height="4.6" fill="#707070"/><rect x="4.7" y="4" width="1.2" height="3" fill="#a8a8a8"/></svg></div><div class="tl" style="left:108.75px;top:590.35px">roi</div>
<div class="ti" style="left:97.65px;top:607.72px"><svg class="ic" width="9" height="9" viewBox="0 0 9 9"><path d="M0.2 0.5 H6.8 L8.9 2 V8.6 H2.2 L0.2 7 Z" fill="#a87848"/><path d="M2.4 2.4H8.7V8.4H2.4Z" fill="#f4ece0"/><path d="M2.2 2.2H8.8M2.2 4.3H8.8M2.2 6.4H8.8M2.2 8.5H8.8M2.3 2.2V8.6M4.4 2.2V8.6M6.5 2.2V8.6M8.7 2.2V8.6" stroke="#8a5a2a" stroke-width="0.9"/><path d="M0.3 0.6L2.3 2.2M2.4 0.5L4.4 2.2M4.6 0.5L6.5 2.2M0.3 2.8L2.3 4.4M0.3 5L2.3 6.5" stroke="#c8a078" stroke-width="0.5"/></svg></div><div class="tl" style="left:108.75px;top:605.12px">source_count</div>
<div class="ti" style="left:97.65px;top:622.49px"><svg class="ic" width="9" height="9" viewBox="0 0 9 9"><path d="M0.2 0.5 H6.8 L8.9 2 V8.6 H2.2 L0.2 7 Z" fill="#a87848"/><path d="M2.4 2.4H8.7V8.4H2.4Z" fill="#f4ece0"/><path d="M2.2 2.2H8.8M2.2 4.3H8.8M2.2 6.4H8.8M2.2 8.5H8.8M2.3 2.2V8.6M4.4 2.2V8.6M6.5 2.2V8.6M8.7 2.2V8.6" stroke="#8a5a2a" stroke-width="0.9"/><path d="M0.3 0.6L2.3 2.2M2.4 0.5L4.4 2.2M4.6 0.5L6.5 2.2M0.3 2.8L2.3 4.4M0.3 5L2.3 6.5" stroke="#c8a078" stroke-width="0.5"/></svg></div><div class="tl" style="left:108.75px;top:619.89px">standard_devia</div>
<div class="ti" style="left:97.65px;top:637.26px"><svg class="ic" width="9" height="9" viewBox="0 0 9 9"><path d="M0.2 0.5 H6.8 L8.9 2 V8.6 H2.2 L0.2 7 Z" fill="#a87848"/><path d="M2.4 2.4H8.7V8.4H2.4Z" fill="#f4ece0"/><path d="M2.2 2.2H8.8M2.2 4.3H8.8M2.2 6.4H8.8M2.2 8.5H8.8M2.3 2.2V8.6M4.4 2.2V8.6M6.5 2.2V8.6M8.7 2.2V8.6" stroke="#8a5a2a" stroke-width="0.9"/><path d="M0.3 0.6L2.3 2.2M2.4 0.5L4.4 2.2M4.6 0.5L6.5 2.2M0.3 2.8L2.3 4.4M0.3 5L2.3 6.5" stroke="#c8a078" stroke-width="0.5"/></svg></div><div class="tl" style="left:108.75px;top:634.66px">total_count</div>
<svg class="ar" style="left:79.30px;top:654.63px" width="4" height="6" viewBox="0 0 4 6"><path d="M0.8 1 L2.8 3 L0.8 5" fill="none" stroke="#a0a0a0" stroke-width="0.85"/></svg><div class="ti" style="left:87.50px;top:653.33px"><svg class="ic" width="9" height="7" viewBox="0 0 9 7"><path d="M0.2 1.4 Q0.2 0.2 1.4 0.2 L2.8 0.2 L3.6 0.9 L7.2 0.9 Q8.3 0.9 8.3 2 L8.3 5.6 Q8.3 6.7 7.2 6.7 L1.6 6.7 Q0.5 6.7 0.4 5.6 Z" fill="#2a1808"/><path d="M0.8 1.6 Q0.8 0.9 1.5 0.9 L2.6 0.9 L3.3 1.6 L6.6 1.6 Q7.3 1.6 7.3 2.3 L7.3 5 Q7.3 5.7 6.6 5.7 L1.6 5.7 Q0.9 5.7 0.9 5 Z" fill="#fbd9a6"/></svg></div><div class="tl" style="left:98.30px;top:649.43px">channel_2_all</div>
<!-- tree scrollbars -->
<div class="abs" style="left:179px;top:73.5px;width:11px;height:591px;background:#f0f0f0"></div>
<div class="abs" style="left:181px;top:86px;width:8.5px;height:241px;background:#cdcdcd"></div>
<svg class="abs" style="left:181px;top:77px" width="8" height="6" viewBox="0 0 8 6"><path d="M1.5 4.3L4 1.8L6.5 4.3" fill="none" stroke="#555" stroke-width="1.15"/></svg>
<svg class="abs" style="left:181px;top:655.5px" width="8" height="6" viewBox="0 0 8 6"><path d="M1.5 1.7L4 4.2L6.5 1.7" fill="none" stroke="#555" stroke-width="1.15"/></svg>
<div class="abs" style="left:2.5px;top:664.5px;width:187.5px;height:12px;background:#f0f0f0"></div>
<div class="abs" style="left:13px;top:666px;width:71px;height:9px;background:#cdcdcd"></div>
<svg class="abs" style="left:4.5px;top:666.5px" width="6" height="8" viewBox="0 0 6 8"><path d="M4.3 1.5L1.8 4L4.3 6.5" fill="none" stroke="#555" stroke-width="1.15"/></svg>
<svg class="abs" style="left:170px;top:666.5px" width="6" height="8" viewBox="0 0 6 8"><path d="M1.7 1.5L4.2 4L1.7 6.5" fill="none" stroke="#555" stroke-width="1.15"/></svg>

<!-- right panel -->
<div id="rpanel"></div>
<div class="abs" style="left:197px;top:73px;width:80.5px;height:16px;background:#fff"></div><div class="abs" style="left:197px;top:87.5px;width:555px;height:588px;background:#fff"></div><div class="abs" style="left:199px;top:89.2px;width:553px;height:585.5px;background:#e9e9e9"></div><div class="abs" style="left:199px;top:89.2px;width:553px;height:5.3px;background:#e4e4e4"></div><div class="abs" style="left:749.5px;top:94.5px;width:2.5px;height:580px;background:#f0f0f0"></div>
<div class="abs" style="left:277.5px;top:74.5px;width:72.5px;height:13px;background:#f3f3f3;border-right:1px solid #e2e2e2;border-top:1px solid #e6e6e6"></div>
<div class="tab" style="left:201.3px;top:73.8px">Object Attribute Info</div>
<div class="tab" style="left:279.5px;top:75px;transform:scaleX(0.91)">General Object Info</div>
<div class="lbl" style="left:203px;top:104px;width:112px;height:16.5px;padding-left:1px;padding-top:0px;margin-top:-0.5px">Attribute Creation Order:</div>
<div class="abs" style="left:319.5px;top:104.5px;width:428.5px;height:16px;background:#f0f0f0;border:1px solid #c6c6c6;-webkit-text-stroke:0.2px #000;font-size:10.25px;line-height:15px;padding-left:4px;white-space:nowrap">Creation Order NOT Tracked</div>
<div class="lbl" style="left:203px;top:123px;width:110px;height:18px;padding-left:1px;padding-top:0px;margin-top:-0.5px;font-size:10.15px">Number of attributes = 0</div>
<div class="btn" style="left:604px;top:124px;width:65.5px;height:17.5px;line-height:16px;background:#cfcfcf;border-color:#c8c8c8;color:#8a8a8a">Add Attribute</div>
<div class="btn" style="left:672.5px;top:124px;width:75px;height:17.5px;line-height:16px;background:#cfcfcf;border-color:#c8c8c8;color:#8a8a8a">Delete Attribute</div>
<div class="abs" style="left:203px;top:144.3px;width:545px;height:527.3px;background:#fff;border:1px solid #b9bdc6"></div>
<div class="hl" style="top:176.0px"></div>
<div class="hl" style="top:191.3px"></div>
<div class="hl" style="top:206.6px"></div>
<div class="hl" style="top:221.8px"></div>
<div class="hl" style="top:237.1px"></div>
<div class="hl" style="top:252.4px"></div>
<div class="hl" style="top:267.7px"></div>
<div class="hl" style="top:283.0px"></div>
<div class="hl" style="top:298.3px"></div>
<div class="hl" style="top:313.5px"></div>
<div class="hl" style="top:328.8px"></div>
<div class="hl" style="top:344.1px"></div>
<div class="hl" style="top:359.4px"></div>
<div class="hl" style="top:374.7px"></div>
<div class="hl" style="top:390.0px"></div>
<div class="hl" style="top:405.2px"></div>
<div class="hl" style="top:420.5px"></div>
<div class="hl" style="top:435.8px"></div>
<div class="hl" style="top:451.1px"></div>
<div class="hl" style="top:466.4px"></div>
<div class="hl" style="top:481.7px"></div>
<div class="hl" style="top:496.9px"></div>
<div class="hl" style="top:512.2px"></div>
<div class="hl" style="top:527.5px"></div>
<div class="hl" style="top:542.8px"></div>
<div class="hl" style="top:558.1px"></div>
<div class="hl" style="top:573.4px"></div>
<div class="hl" style="top:588.6px"></div>
<div class="hl" style="top:603.9px"></div>
<div class="hl" style="top:619.2px"></div>
<div class="hl" style="top:634.5px"></div>
<div class="hl" style="top:649.8px"></div>
<div class="hl" style="top:665.1px"></div>
<div class="vl" style="left:238px"></div>
<div class="vl" style="left:270px"></div>
<div class="vl" style="left:324px"></div>
<div class="vl" style="left:430px"></div>
<div class="th" style="left:208.3px">Name</div>
<div class="th" style="left:243px">Type</div>
<div class="th" style="left:273.5px">Array Size</div>
<div class="th" style="left:325.6px;letter-spacing:0.3px">Value[50](...)</div>
<!-- right scrollbar -->
<div class="abs" style="left:752px;top:73.5px;width:14px;height:601px;background:#f0f0f0"></div>
<div class="abs" style="left:755.2px;top:84.5px;width:9.8px;height:580px;background:#cdcdcd"></div>
<svg class="abs" style="left:755.8px;top:75.8px" width="8" height="6" viewBox="0 0 8 6"><path d="M1.5 4.3L4 1.8L6.5 4.3" fill="none" stroke="#555" stroke-width="1.15"/></svg>
<svg class="abs" style="left:755.9px;top:668px" width="8" height="6" viewBox="0 0 8 6"><path d="M1.5 1.7L4 4.2L6.5 1.7" fill="none" stroke="#555" stroke-width="1.15"/></svg>

<!-- inner window -->
<div id="win">
 <div id="wtitle">
  <svg class="abs" style="left:5.3px;top:5px" width="11" height="11" viewBox="0 0 11 11"><circle cx="5.5" cy="5.5" r="5" fill="#1a2a6a"/><path d="M2 2.5Q4 0.8 5.5 2.2Q4.2 4 2.2 4.5Z" fill="#d8d020"/><path d="M6.5 3Q9 2.2 9.8 4.8Q8 6.5 6.8 5Z" fill="#d8d020"/><path d="M2.5 6.5Q4.5 6 5.5 8Q4.5 10 3 9Z" fill="#3aa030"/><path d="M6.5 7.5Q8 7 8.8 8Q7.5 9.8 6.3 9.3Z" fill="#d8d020"/></svg>
  <div class="t">metric_image&nbsp; at&nbsp; /imatest_result/stray_light/results/per_capture/capture_11/subse...</div>
  <svg class="abs" style="left:318px;top:0" width="86" height="19" viewBox="0 0 86 19"><path d="M5.3 9.7H11.3" stroke="#fff" stroke-width="0.7"/><rect x="36" y="6.9" width="6" height="6" fill="none" stroke="#fff" stroke-width="0.7"/><path d="M67 6.8L73.2 13M73.2 6.8L67 13" stroke="#fff" stroke-width="0.7"/></svg>
 </div>
 <div class="abs" style="left:0.3px;top:19.6px;width:403.4px;height:12.4px;background:#fff"></div>
 <div class="abs" style="left:4.3px;top:22px;font-size:8.5px;line-height:10px;color:#222;white-space:nowrap;transform-origin:0 0;transform:scaleX(0.93)">Image</div>
</div>
<!-- window toolbar -->
<div class="abs" style="left:250.2px;top:210.9px;width:399px;height:15.8px;border-top:2px solid #a9a9a9;border-left:1.8px solid #adadad;border-bottom:1px solid #e6e6e6;border-right:1px solid #e6e6e6"></div>
<svg class="abs" style="left:252px;top:212.5px" width="72" height="13" viewBox="0 0 72 13">
 <path d="M1.5 1V11.5H11.5" fill="none" stroke="#555" stroke-width="0.7"/><rect x="1.8" y="1" width="9.6" height="10.3" fill="#f6f0f0"/><path d="M2.8 11V5M4.4 11V7M6 11V8M7.6 11V6M9.2 11V4M10.6 11V2.5" stroke="#a82020" stroke-width="0.85"/><path d="M2 2.5L6 6.5L11 1.5" fill="none" stroke="#5868d8" stroke-width="0.8"/><path d="M2.5 9L5 8.2L7.5 9.2L11 8" fill="none" stroke="#30a030" stroke-width="0.6"/>
 <defs><linearGradient id="rb" x1="0" x2="1" y1="0" y2="0"><stop offset="0" stop-color="#ff2020"/><stop offset="0.2" stop-color="#f8f020"/><stop offset="0.4" stop-color="#20e030"/><stop offset="0.6" stop-color="#20d8e8"/><stop offset="0.8" stop-color="#2830f0"/><stop offset="1" stop-color="#e020e0"/></linearGradient><linearGradient id="fd" x1="0" x2="0" y1="0" y2="1"><stop offset="0" stop-color="#888" stop-opacity="0"/><stop offset="1" stop-color="#888" stop-opacity="0.75"/></linearGradient></defs>
 <rect x="15.2" y="1.2" width="10.6" height="10.6" fill="url(#rb)"/><rect x="15.2" y="1.2" width="10.6" height="10.6" fill="url(#fd)"/>
 <rect x="29.5" y="1" width="10.5" height="11" fill="#fafafa"/><circle cx="34.7" cy="6.5" r="2.4" fill="#fff" stroke="#444" stroke-width="0.7"/><path d="M34.7 1.5V3.2M34.7 9.8V11.5M29.8 6.5H31.4M38 6.5H39.7M31.2 3L32.4 4.2M37 8.8L38.2 10M38.2 3L37 4.2M32.4 8.8L31.2 10" stroke="#444" stroke-width="0.6"/>
 <circle cx="48.5" cy="5.5" r="3.7" fill="#e8f4f6" stroke="#103038" stroke-width="1.3"/><path d="M51.3 8.3L54 11.4" stroke="#7a7a40" stroke-width="1.6"/><path d="M46.8 5.3H50.4" stroke="#d01818" stroke-width="1.2"/><path d="M48.8 4V6.8" stroke="#3040c0" stroke-width="0.9"/>
 <circle cx="62.5" cy="5.5" r="3.7" fill="#e8f4f6" stroke="#103038" stroke-width="1.3"/><path d="M65.3 8.3L68 11.4" stroke="#7a7a40" stroke-width="1.6"/><path d="M60.8 5.3H64.4" stroke="#d01818" stroke-width="1.2"/>
</svg>
<!-- content panel -->
<div class="abs" style="left:250.5px;top:236px;width:398.5px;height:294px;border:1px solid #e3e3e3;border-top-color:#e6e6e6;background:#f0f0f0"></div>
<div class="abs" style="left:255px;top:246.9px;font-size:7.9px;line-height:10px;color:#111;white-space:nowrap;transform-origin:0 0;transform:scaleX(0.9)">(0,0)</div>
<div class="abs" style="left:254.3px;top:258.7px;width:343.2px;height:269px;border:1px solid #dedede;background:#f0f0f0"></div>
<svg class="abs" style="left:256px;top:259.7px" width="336.7" height="253" viewBox="0 0 337 252" preserveAspectRatio="none">
 <defs>
  <radialGradient id="g1" cx="286.3" cy="125.2" r="70" gradientUnits="userSpaceOnUse"><stop offset="0" stop-color="#fff"/><stop offset="0.095" stop-color="#fff"/><stop offset="0.128" stop-color="#e8e8e8"/><stop offset="0.175" stop-color="#909090"/><stop offset="0.22" stop-color="#5c5c5c"/><stop offset="0.3" stop-color="#393939"/><stop offset="0.4" stop-color="#222"/><stop offset="0.55" stop-color="#121212"/><stop offset="0.75" stop-color="#070707"/><stop offset="1" stop-color="#000"/></radialGradient>
  <radialGradient id="p" cx="0.5" cy="0.5" r="0.5"><stop offset="0" stop-color="#0d0d0d"/><stop offset="0.75" stop-color="#0b0b0b"/><stop offset="1" stop-color="#000"/></radialGradient>
  <radialGradient id="st" cx="0.5" cy="0.5" r="0.5"><stop offset="0" stop-color="#101010"/><stop offset="0.6" stop-color="#080808"/><stop offset="1" stop-color="#000"/></radialGradient>
  <filter id="bl" x="-20%" y="-20%" width="140%" height="140%"><feGaussianBlur stdDeviation="1.2"/></filter>
  <filter id="bl2" x="-20%" y="-20%" width="140%" height="140%"><feGaussianBlur stdDeviation="0.7"/></filter>
 </defs>
 <rect width="337" height="252" fill="#000"/>
 <g style="mix-blend-mode:screen">
 <ellipse cx="281" cy="66" rx="23" ry="30" fill="url(#p)"/>
 <ellipse cx="281" cy="187" rx="23" ry="30" fill="url(#p)"/>
 <ellipse cx="331" cy="66" rx="21" ry="36" fill="url(#p)"/>
 <ellipse cx="331" cy="187" rx="21" ry="36" fill="url(#p)"/>
 <ellipse cx="245" cy="125" rx="45" ry="24" fill="url(#st)"/>
 </g>
 <circle cx="286.3" cy="125.2" r="70" fill="url(#g1)" style="mix-blend-mode:screen"/>
 <g stroke="#fff" stroke-opacity="0.04" stroke-width="1.4" fill="none" filter="url(#bl)">
  <path d="M278 121 Q250 108 215 112"/><path d="M278 124 Q245 118 212 124"/><path d="M278 128 Q248 136 214 134"/><path d="M279 131 Q255 146 226 146"/><path d="M279 118 Q258 100 232 100"/>
  <path d="M286 125 L262 96M286 125 L300 92M286 125 L318 104M286 125 L322 140M286 125 L305 160M286 125 L270 160M286 125 L258 148M286 125 L282 90"/>
 </g>
 <circle cx="287.4" cy="125.6" r="2.6" fill="#cfcfcf" filter="url(#bl2)"/>
</svg>
<!-- colorbar -->
<div class="abs" style="left:600px;top:259.3px;width:12.7px;height:267.7px;background:linear-gradient(to bottom,#000 0%,#fff 100%)"></div>
<div class="abs" style="left:613px;top:259px;width:32.2px;height:268px;overflow:hidden"><div style="position:relative;left:-613px;top:2px">
<div class="cbl" style="top:-4.60px">0.00E0</div>
<div class="cbl" style="top:6.99px">3.95E-2</div>
<div class="cbl" style="top:18.58px">7.89E-2</div>
<div class="cbl" style="top:30.17px">1.18E-1</div>
<div class="cbl" style="top:41.76px">1.58E-1</div>
<div class="cbl" style="top:53.35px">1.97E-1</div>
<div class="cbl" style="top:64.94px">2.37E-1</div>
<div class="cbl" style="top:76.53px">2.76E-1</div>
<div class="cbl" style="top:88.12px">3.16E-1</div>
<div class="cbl" style="top:99.71px">3.55E-1</div>
<div class="cbl" style="top:111.30px">3.95E-1</div>
<div class="cbl" style="top:122.89px">4.34E-1</div>
<div class="cbl" style="top:134.48px">4.74E-1</div>
<div class="cbl" style="top:146.07px">5.13E-1</div>
<div class="cbl" style="top:157.66px">5.53E-1</div>
<div class="cbl" style="top:169.25px">5.92E-1</div>
<div class="cbl" style="top:180.84px">6.32E-1</div>
<div class="cbl" style="top:192.43px">6.71E-1</div>
<div class="cbl" style="top:204.02px">7.11E-1</div>
<div class="cbl" style="top:215.61px">7.50E-1</div>
<div class="cbl" style="top:227.20px">7.89E-1</div>
<div class="cbl" style="top:238.79px">8.29E-1</div>
<div class="cbl" style="top:250.38px">8.68E-1</div>
<div class="cbl" style="top:261.97px">9.08E-1</div>
</div></div>
</body></html>
